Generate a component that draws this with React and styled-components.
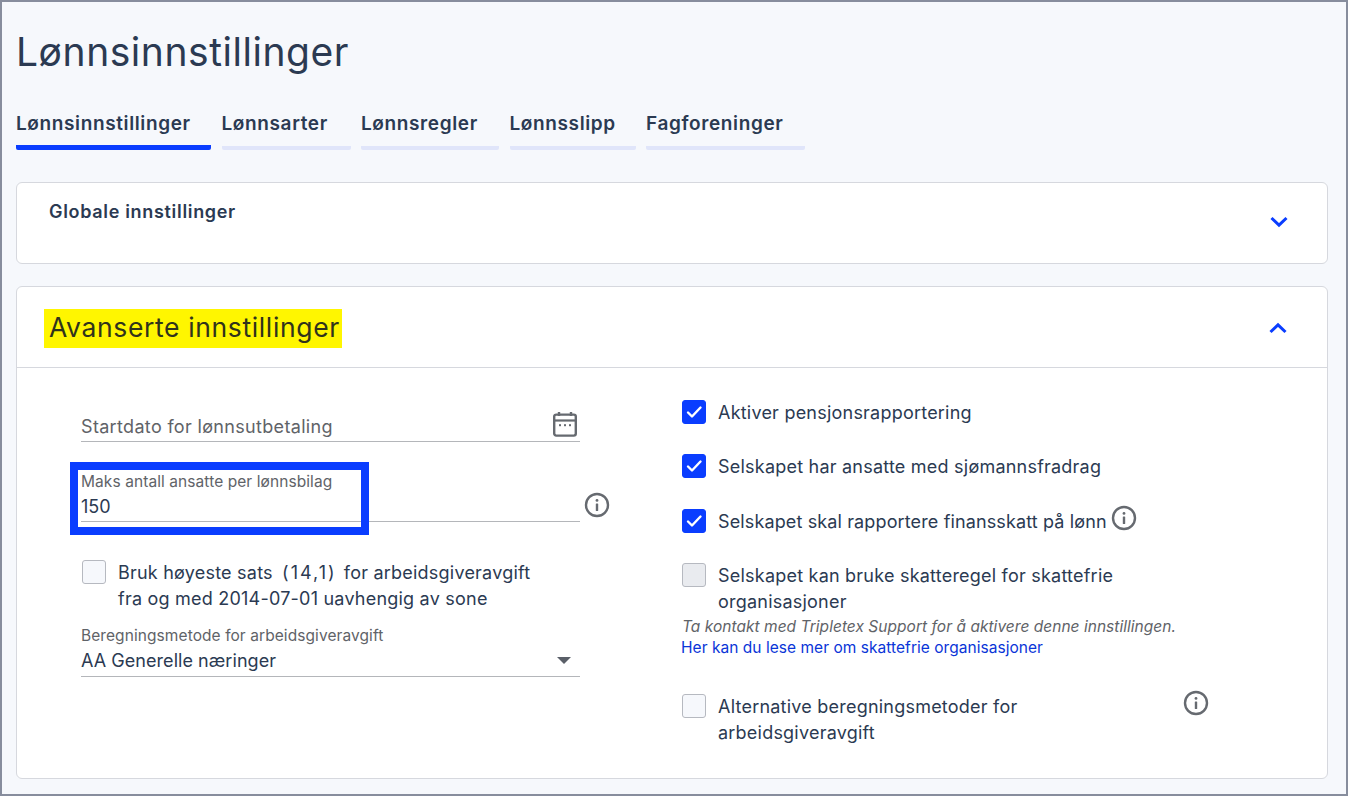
import React from "react";
import styled, { createGlobalStyle } from "styled-components";

const Global = createGlobalStyle`
  html, body { margin: 0; padding: 0; background: #f6f8fc; }
  * { box-sizing: border-box; }
  body { font-family: "Inter", "Noto Sans CJK JP", "Liberation Sans", sans-serif; color: #2b3950; }
`;
const Page = styled.div`
  width: 1348px; height: 796px; overflow: hidden;
  border: 2px solid #878d9d; background: #f6f8fc;
  padding: 0 18px 0 14px;
`;
const Title = styled.h1`
  margin: 28px 0 0 0; height: 44px; font-size: 39px; line-height: 44px; font-weight: 400; color: #2b3a52;
  letter-spacing: .55px; padding-left: 0;
`;
const Tabs = styled.nav`
  display: flex; gap: 10.5px; margin-top: 31px;
`;
const Tab = styled.div`
  width: ${p => p.$w}px; height: 45px; font-size: 19px; line-height: 38px; font-weight: 600; color: #2b3a52; letter-spacing: .62px;
  border-bottom: ${p => p.$active ? "5px solid #0a3dff" : "4px solid #e0e5fa"};
  border-radius: 0 0 2px 2px; white-space: nowrap;
`;
const Card = styled.section`
  background: #fff; border: 1px solid #d6d8de; border-radius: 6px; position: relative;
`;
const GlobalCard = styled(Card)`
  margin-top: 32px; height: 82px; display: flex; justify-content: space-between; padding: 17px 38px 0 32px;
`;
const Heading = styled.h3`
  margin: 0; font-size: 18px; line-height: 24px; font-weight: 600; color: #2b3a52; letter-spacing: .68px;
`;
const AdvCard = styled(Card)`
  margin-top: 22px; height: 493px;
`;
const AdvHead = styled.header`
  height: 81px; border-bottom: 1px solid #d6d8de; display: flex; align-items: center; justify-content: space-between;
  padding: 2px 39px 0 27px;
`;
const Marked = styled.h2`
  margin: 0; background: #fff600; padding: 0 2px 0 5px; height: 39px; font-size: 26.5px; line-height: 36px; font-weight: 400; color: #30331c; letter-spacing: .63px;
`;
const Body = styled.div`
  display: grid; grid-template-columns: 601px 1fr; padding: 32px 0 0 64px;
`;
const LeftCol = styled.div`display: flex; flex-direction: column;`;
const RightCol = styled.div`display: flex; flex-direction: column;`;
const FieldRow = styled.div`display: flex; align-items: center; gap: 4px; position: relative;`;
const Field = styled.div`
  width: 499px; height: ${p => p.$h}px; border-bottom: 1px solid #b4b6ba; position: relative;
  margin-top: ${p => p.$mt || 0}px; display: flex; flex-direction: column; justify-content: flex-end; flex: none;
`;
const Placeholder = styled.span`
  font-size: 18px; line-height: 28px; color: #5f6368; letter-spacing: .33px;
`;
const Small = styled.span`
  font-size: 15.5px; line-height: 20px; color: #5f6368; margin-bottom: 2px; letter-spacing: .08px;
`;
const Value = styled.span`
  font-size: 18px; line-height: 26px; color: #2b3a52; padding-bottom: ${p => p.$pb ?? 1}px; letter-spacing: .05px;
`;
const CalIcon = styled.svg`position: absolute; right: 2px; top: 11px; width: 26px; height: 26px;`;
const Caret = styled.i`
  position: absolute; right: 9px; bottom: 12px; width: 0; height: 0;
  border-left: 7px solid transparent; border-right: 7px solid transparent; border-top: 7px solid #5a5f68;
`;
const Highlight = styled.div`
  position: absolute; left: -11px; top: -5px; width: 299px; height: 73px; border: 8px solid #0a3dff;
`;
const Box = styled.span`
  flex: none; width: 24px; height: 24px; border-radius: 3px; display: flex; align-items: center; justify-content: center;
  background: ${p => p.$checked ? "#0a3dff" : p.$disabled ? "#e9ebef" : "#f6f8fc"};
  border: 1px solid ${p => p.$checked ? "#0a3dff" : "#b6b9c0"};
`;
const Check = styled.label`
  display: flex; gap: 12px; align-items: flex-start; font-size: 18px; line-height: ${p => p.$lh || 26}px; color: #2b3a52;
  letter-spacing: ${p => p.$ls ?? 0.22}px;
  margin-top: ${p => p.$mt || 0}px; margin-left: ${p => p.$ml || 0}px; width: ${p => p.$w ? p.$w + "px" : "auto"};
`;
const Rate = styled.span`letter-spacing: 2px; margin: 0 2px 0 4px;`;
const Note = styled.p`
  margin: 0; font-size: 15.5px; line-height: 21px; font-style: italic; color: #5f6368; letter-spacing: .03px;
`;
const NoteLink = styled.a`
  display: block; font-size: 15.5px; line-height: 21px; color: #0a35d8; text-decoration: none; margin-left: -1px; letter-spacing: .04px;
`;
const Notes = styled.div`margin-top: 1px;`;
const CheckWrap = styled.div`display: flex; align-items: flex-start; position: relative;`;
const InfoWrap = styled.span`display: inline-flex; margin-left: ${p => p.$ml || 0}px; margin-top: ${p => p.$mt || 0}px; color: #666a70;`;

const Chevron = ({ up }) => (
  <svg width="20" height="12" viewBox="0 0 20 12" fill="none" style={{ marginTop: up ? 0 : 16 }}>
    <path d={up ? "M2.5 10 L10 2.8 L17.5 10" : "M2.5 2 L10 9.2 L17.5 2"} stroke="#0a3dff" strokeWidth="3" />
  </svg>
);
const Info = () => (
  <svg width="26" height="26" viewBox="0 0 26 26" fill="none">
    <circle cx="13" cy="13" r="11" stroke="currentColor" strokeWidth="2.4" />
    <rect x="11.8" y="11.5" width="2.4" height="7.5" rx=".6" fill="currentColor" />
    <circle cx="13" cy="8.4" r="1.4" fill="currentColor" />
  </svg>
);
const Tick = () => (
  <svg width="18" height="16" viewBox="0 0 18 16" fill="none">
    <path d="M3 8.5 L7 12.5 L15.5 3.5" stroke="#fff" strokeWidth="2.4" strokeLinecap="round" strokeLinejoin="round" />
  </svg>
);

export default function App() {
  return (
    <>
      <Global />
      <Page>
        <Title>Lønnsinnstillinger</Title>
        <Tabs>
          <Tab $w={195} $active>Lønnsinnstillinger</Tab>
          <Tab $w={129}>Lønnsarter</Tab>
          <Tab $w={138}>Lønnsregler</Tab>
          <Tab $w={126}>Lønnsslipp</Tab>
          <Tab $w={159}>Fagforeninger</Tab>
        </Tabs>
        <GlobalCard>
          <Heading>Globale innstillinger</Heading>
          <Chevron />
        </GlobalCard>
        <AdvCard>
          <AdvHead>
            <Marked>Avanserte innstillinger</Marked>
            <Chevron up />
          </AdvHead>
          <Body>
            <LeftCol>
              <Field $h={42}>
                <Placeholder>Startdato for lønnsutbetaling</Placeholder>
                <CalIcon viewBox="0 0 26 26" fill="none">
                  <rect x="2.2" y="3.6" width="21.6" height="21" rx="2" stroke="#666a70" strokeWidth="2.4" />
                  <rect x="2.2" y="8.4" width="21.6" height="2.2" fill="#666a70" />
                  <rect x="5.8" y="1" width="2.4" height="4" fill="#666a70" />
                  <rect x="17.8" y="1" width="2.4" height="4" fill="#666a70" />
                  <rect x="7" y="13.2" width="2" height="2" fill="#666a70" />
                  <rect x="12" y="13.2" width="2" height="2" fill="#666a70" />
                  <rect x="17" y="13.2" width="2" height="2" fill="#666a70" />
                </CalIcon>
              </Field>
              <FieldRow>
                <Field $h={55} $mt={25}>
                  <Highlight />
                  <Small>Maks antall ansatte per lønnsbilag</Small>
                  <Value>150</Value>
                </Field>
                <InfoWrap $mt={45}><Info /></InfoWrap>
              </FieldRow>
              <Check $mt={38} $ml={1} $w={470}>
                <Box />
                <span>Bruk høyeste sats <Rate>(14,1)</Rate> for arbeidsgiveravgift<br />fra og med 2014-07-01 uavhengig av sone</span>
              </Check>
              <Field $h={55} $mt={10}>
                <Small>Beregningsmetode for arbeidsgiveravgift</Small>
                <Value $pb={2}>AA Generelle næringer</Value>
                <Caret />
              </Field>
            </LeftCol>
            <RightCol>
              <Check><Box $checked><Tick /></Box><span>Aktiver pensjonsrapportering</span></Check>
              <Check $mt={28}><Box $checked><Tick /></Box><span>Selskapet har ansatte med sjømannsfradrag</span></Check>
              <Check $mt={29} $ls={0.13}>
                <Box $checked><Tick /></Box>
                <span>Selskapet skal rapportere finansskatt på lønn</span>
                <InfoWrap $ml={-8} $mt={-4}><Info /></InfoWrap>
              </Check>
              <Check $mt={28} $w={480}>
                <Box $disabled />
                <span>Selskapet kan bruke skatteregel for skattefrie organisasjoner</span>
              </Check>
              <Notes>
                <Note>Ta kontakt med Tripletex Support for å aktivere denne innstillingen.</Note>
                <NoteLink href="#">Her kan du lese mer om skattefrie organisasjoner</NoteLink>
              </Notes>
              <CheckWrap>
                <Check $mt={35.5} $w={380} $lh={26.5}>
                  <Box />
                  <span>Alternative beregningsmetoder for arbeidsgiveravgift</span>
                </Check>
                <InfoWrap $ml={121} $mt={32}><Info /></InfoWrap>
              </CheckWrap>
            </RightCol>
          </Body>
        </AdvCard>
      </Page>
    </>
  );
}
